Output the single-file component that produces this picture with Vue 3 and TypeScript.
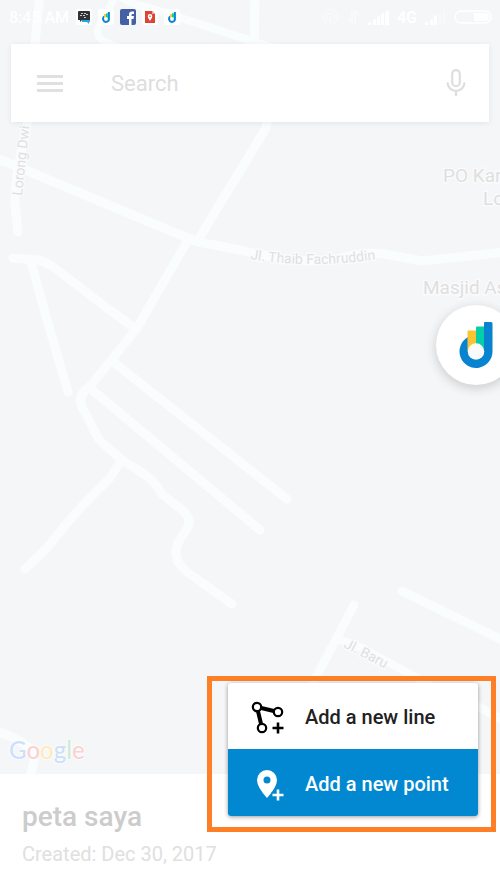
<script setup lang="ts">
import { ref } from 'vue'

interface Road {
  d: string
  width: number
}

interface Letter {
  char: string
  color: string
}

const query = ref('')

const roads: Road[] = [
  { d: 'M40 -6 L35 44 L27 125 Q14 180 15 205 L18 232', width: 9 },
  { d: 'M117 -6 L98 28 Q95 38 106 42 L150 60', width: 7 },
  { d: 'M118 -6 Q130 5 150 8 L280 50', width: 8 },
  { d: 'M255 -6 L254 60 Q274 100 266 128 L198 240', width: 9 },
  { d: 'M-6 157 L30 172 L190 239 Q198 243 215 245 L258 254 Q310 266 345 257 Q370 250 395 256 L422 261 L506 252', width: 9 },
  { d: 'M188 240 L137 328 L109 363 L90 386 Q77 395 82 407 L95 432 Q98 440 106 446 L122 460 L138 470 Q155 480 162 494 L182 510 Q193 519 187 529 L180 539 Q173 550 178 562 Q184 571 197 579 L232 604', width: 9 },
  { d: 'M13 258 L38 260 Q47 262 56 269 L103 305 L136 329', width: 9 },
  { d: 'M31 262 L47 320 L68 392', width: 9 },
  { d: 'M112 361 L287 499', width: 9 },
  { d: 'M91 389 L260 530', width: 9 },
  { d: 'M120 463 L109 479 Q75 511 47 548 L25 569', width: 9 },
  { d: 'M354 605 L312 685', width: 9 },
  { d: 'M336 638 L362 648 L430 685', width: 8 },
  { d: 'M402 591 L506 642', width: 9 },
  { d: 'M470 702 L506 722', width: 9 },
  { d: 'M-6 731 Q35 742 34 762 L29 780', width: 9 },
]

const brand: Letter[] = [
  { char: 'G', color: '#cddffc' },
  { char: 'o', color: '#fad2d1' },
  { char: 'o', color: '#fdebb8' },
  { char: 'g', color: '#cddffc' },
  { char: 'l', color: '#cfead6' },
  { char: 'e', color: '#fad2d1' },
]
</script>

<template>
  <div class="page">
    <svg width="0" height="0" class="defs" aria-hidden="true">
      <symbol id="datally" viewBox="0 0 34 46">
        <path fill="#0783cf" d="M25 1Q25 0 26 0H32Q33.500 0 33.500 1.500V29A16.500 16.500 0 1 1 9 15L14 22L25 25Z" />
        <path fill="#f8c431" d="M8.500 9.500Q8.500 8.500 9.500 8.500H17V29H8.500Z" />
        <path fill="#05cfab" d="M17 5.500Q17 4.500 18 4.500H25V29H17Z" />
        <circle cx="17" cy="29.500" r="8.300" fill="#fafafa" />
      </symbol>
    </svg>

    <main class="map">
      <svg class="canvas" viewBox="0 0 500 774" preserveAspectRatio="xMidYMid slice" aria-hidden="true">
        <path v-for="(road, i) in roads" :key="i" :d="road.d" :stroke-width="road.width" class="road" />
        <path id="thaib" d="M250 259 Q310 269 378 259" fill="none" />
        <g class="label street">
          <text transform="translate(22 196) rotate(-84)">Lorong Dwi</text>
          <text><textPath href="#thaib">Jl. Thaib Fachruddin</textPath></text>
          <text transform="translate(343 647) rotate(27)">Jl. Baru</text>
        </g>
        <g class="label place">
          <text x="443" y="182">PO Kar</text>
          <text x="483" y="205">Lo</text>
          <text x="423" y="294">Masjid As</text>
        </g>
      </svg>

      <header class="status">
        <span class="clock">8:45 AM</span>
        <div class="apps">
          <svg viewBox="0 0 16 16" class="app">
            <rect width="16" height="16" rx="2" fill="#fff" />
            <path d="M6 10h8v3h-1v2l-2-2H6z" fill="#24a8df" />
            <path d="M3 2h10q1 0 1 1v8H6l-2 2v-2H2V3q0-1 1-1z" fill="#303236" />
            <path d="M5 4h2v1H5zM8 4h2v1H8zM4 6h2v1H4zM7 6h2v1H7zM10 5h2v1h-2zM8 8h2v1H8z" fill="#c9cacc" />
          </svg>
          <span class="app tile"><svg class="mini"><use href="#datally" /></svg></span>
          <svg viewBox="0 0 16 16" class="app">
            <rect width="16" height="16" rx="2" fill="#4461a5" />
            <path d="M9 16V10H7V7h2V5.500Q9 2.500 12 2.500h2V5h-1.500Q11.500 5 11.500 6v1H14l-.5 3h-2v6z" fill="#fff" />
          </svg>
          <svg viewBox="0 0 16 16" class="app">
            <rect width="16" height="16" rx="2" fill="#fff" />
            <path d="M3 2h7l3 3v9H3z" fill="#dc4437" />
            <path d="M10 2l3 3h-3z" fill="#f3a69f" />
            <path d="M8 5a2.300 2.300 0 0 1 2.300 2.300Q10.300 9 8 12Q5.700 9 5.700 7.300A2.300 2.300 0 0 1 8 5z" fill="#fff" />
            <circle cx="8" cy="7.300" r=".8" fill="#dc4437" />
          </svg>
          <span class="app tile"><svg class="mini"><use href="#datally" /></svg></span>
        </div>
        <div class="signals">
          <svg width="17" height="16" viewBox="0 0 17 16" fill="none" stroke="#f9fafb" stroke-width="1.500">
            <path d="M4.500 14A7.300 7.300 0 1 1 12.500 14M6 11A4 4 0 1 1 11 11" />
            <path d="M8.500 8v6" />
          </svg>
          <svg width="13" height="16" viewBox="0 0 13 16" fill="none" stroke="#f9fafb" stroke-width="2">
            <path d="M5 2v12L1 10M8 14V2l4 4" />
          </svg>
          <svg width="21" height="15" viewBox="0 0 21 15" fill="#fff">
            <path d="M0 15v-2l3-1v3zM5 15v-5l3-1v6zM9 15V7l3-1v9zM13 15V4l3-1v12zM17 15V2l4-2v15z" />
          </svg>
          <span class="net">4G</span>
          <svg width="21" height="15" viewBox="0 0 21 15" fill="#fff">
            <path d="M0 15v-2l3-1v3zM5 15v-5l3-1v6zM9 15V6l3-1v10z" />
            <path d="M14 15V4l2-1v12zM18 15V2l2-1v14z" opacity=".3" />
          </svg>
          <svg width="38" height="14" viewBox="0 0 38 14">
            <rect x="1" y="1" width="36" height="12" rx="6" fill="none" stroke="#fff" stroke-width="1.500" />
            <path d="M20 3h11a4 4 0 0 1 0 8H20z" fill="#fff" />
          </svg>
        </div>
      </header>

      <form class="search" role="search" @submit.prevent>
        <button type="button" class="icon-button" aria-label="Menu">
          <svg width="26" height="18" viewBox="0 0 26 18" fill="#e0e0e0">
            <path d="M0 1h26v3H0zM0 8h26v3H0zM0 15h26v3H0z" />
          </svg>
        </button>
        <input v-model="query" type="text" placeholder="Search" aria-label="Search" />
        <button type="button" class="icon-button" aria-label="Voice search">
          <svg width="20" height="28" viewBox="0 0 20 28" fill="none" stroke="#dedede">
            <rect x="6.200" y="1.200" width="7.600" height="16" rx="3.800" stroke-width="2.200" />
            <path d="M1.500 13.500a8.500 8.500 0 0 0 17 0M10 22v5" stroke-width="2.200" />
          </svg>
        </button>
      </form>

      <button type="button" class="bubble" aria-label="Data saver">
        <svg class="bubble-logo"><use href="#datally" /></svg>
      </button>

      <a href="#" class="brand"><span v-for="(letter, i) in brand" :key="i" :style="{ color: letter.color }">{{ letter.char }}</span></a>
    </main>

    <footer class="sheet">
      <h1>peta saya</h1>
      <p>Created: Dec 30, 2017</p>
    </footer>

    <div class="highlight">
      <div class="menu">
        <button type="button" class="item">
          <svg width="34" height="34" viewBox="0 -1 34 34">
            <g stroke="#000" fill="none">
              <path d="M6 6L27 11M6 6L11 27" stroke-width="4" />
              <g fill="#fff" stroke-width="2.200">
                <circle cx="6" cy="6" r="4.200" />
                <circle cx="27" cy="11" r="4.200" />
                <circle cx="11" cy="27" r="4.200" />
              </g>
              <path d="M27 21.500v11M21.500 27h11" stroke-width="2.600" />
            </g>
          </svg>
          <span>Add a new line</span>
        </button>
        <button type="button" class="item active">
          <svg width="34" height="34" viewBox="0 -1 34 34">
            <path fill="#fff" fill-rule="evenodd" d="M16 2A10 10 0 0 0 6 12Q6 19 16 30Q26 19 26 12A10 10 0 0 0 16 2ZM16 8.500A3.500 3.500 0 1 1 16 15.500A3.500 3.500 0 1 1 16 8.500Z" />
            <path stroke="#0288d1" stroke-width="5" d="M27 20v13M20 27h13" />
            <path stroke="#fff" stroke-width="2.600" d="M27 21.500v11M21.500 27h11" />
          </svg>
          <span>Add a new point</span>
        </button>
      </div>
    </div>
  </div>
</template>

<style>
body {
  margin: 0;
}
</style>

<style scoped>
.page {
  position: relative;
  display: flex;
  flex-direction: column;
  min-height: 100vh;
  overflow: hidden;
  background: #fff;
  font-family: Roboto, 'Liberation Sans', sans-serif;
}

button {
  padding: 0;
  border: 0;
  background: none;
  font: inherit;
  cursor: pointer;
}

svg {
  display: block;
}

.defs {
  position: absolute;
}

.map {
  position: relative;
  flex: 1;
  display: flex;
  flex-direction: column;
  background: #f5f6f8;
}

.canvas {
  position: absolute;
  inset: 0;
  width: 100%;
  height: 100%;
}

.road {
  fill: none;
  stroke: #fafdfe;
  stroke-linecap: round;
  stroke-linejoin: round;
}

.label {
  stroke: #fafbfc;
  stroke-width: 3px;
  paint-order: stroke;
}

.street {
  fill: #dfe0e1;
  font-size: 14px;
}

.place {
  fill: #e1dfdd;
  font-size: 19px;
}

.status {
  position: relative;
  display: flex;
  align-items: center;
  height: 34px;
  padding: 0 8px 0 9px;
  color: #fff;
}

.clock {
  width: 67px;
  font-size: 16px;
  font-weight: 500;
}

.apps {
  display: flex;
  gap: 6px;
}

.app {
  width: 16px;
  height: 16px;
}

.tile {
  display: grid;
  place-items: center;
  border-radius: 2px;
  background: #fff;
}

.mini {
  width: 8px;
  height: 11px;
}

.signals {
  display: flex;
  align-items: center;
  gap: 8px;
  margin-left: auto;
}

.net {
  font-size: 16px;
  font-weight: 700;
}

.search {
  position: relative;
  display: flex;
  align-items: center;
  height: 78px;
  margin: 10px 11px 0;
  padding: 0 23px 0 26px;
  box-sizing: border-box;
  background: #fff;
  box-shadow: 0 1px 6px rgba(0, 0, 0, 0.08);
}

.search input {
  flex: 1;
  min-width: 0;
  margin: 0 24px 0 48px;
  padding: 0;
  border: 0;
  outline: 0;
  background: none;
  color: #757575;
  font: 22px Roboto, 'Liberation Sans', sans-serif;
}

.search input::placeholder {
  color: #dedede;
  opacity: 1;
}

.bubble {
  position: absolute;
  top: 305px;
  right: -16px;
  display: grid;
  place-items: center;
  width: 80px;
  height: 80px;
  border-radius: 50%;
  background: #fff;
  box-shadow: 0 3px 12px rgba(0, 0, 0, 0.18);
}

.bubble-logo {
  width: 34px;
  height: 46px;
}

.brand {
  position: relative;
  align-self: flex-start;
  margin: auto 0 8px 9px;
  font: 500 24px/32px Lato, sans-serif;
  text-decoration: none;
  text-shadow: 0 0 2px #fff, 0 0 2px #fff, 0 0 3px #fff;
}

.sheet {
  height: 114px;
  padding: 26px 22px 0;
  box-sizing: border-box;
}

.sheet h1 {
  margin: 0;
  color: #cccccc;
  font-size: 28px;
  font-weight: 500;
  line-height: 34px;
}

.sheet p {
  margin: 8px 0 0;
  color: #e0e0e0;
  font-size: 20px;
  line-height: 24px;
}

.highlight {
  position: absolute;
  right: 4px;
  bottom: 56px;
  padding: 2px 13px 11px 16px;
  border: 5px solid #ff7f27;
}

.menu {
  width: 250px;
  overflow: hidden;
  border-radius: 3px;
  background: #fff;
  box-shadow: 0 1px 4px rgba(0, 0, 0, 0.4);
}

.item {
  display: flex;
  align-items: center;
  gap: 20px;
  width: 100%;
  height: 66px;
  padding: 2px 23px 0;
  color: #212121;
  font-size: 20px;
  font-weight: 500;
}

.item.active {
  height: 67px;
  background: #0288d1;
  color: #fff;
}
</style>
